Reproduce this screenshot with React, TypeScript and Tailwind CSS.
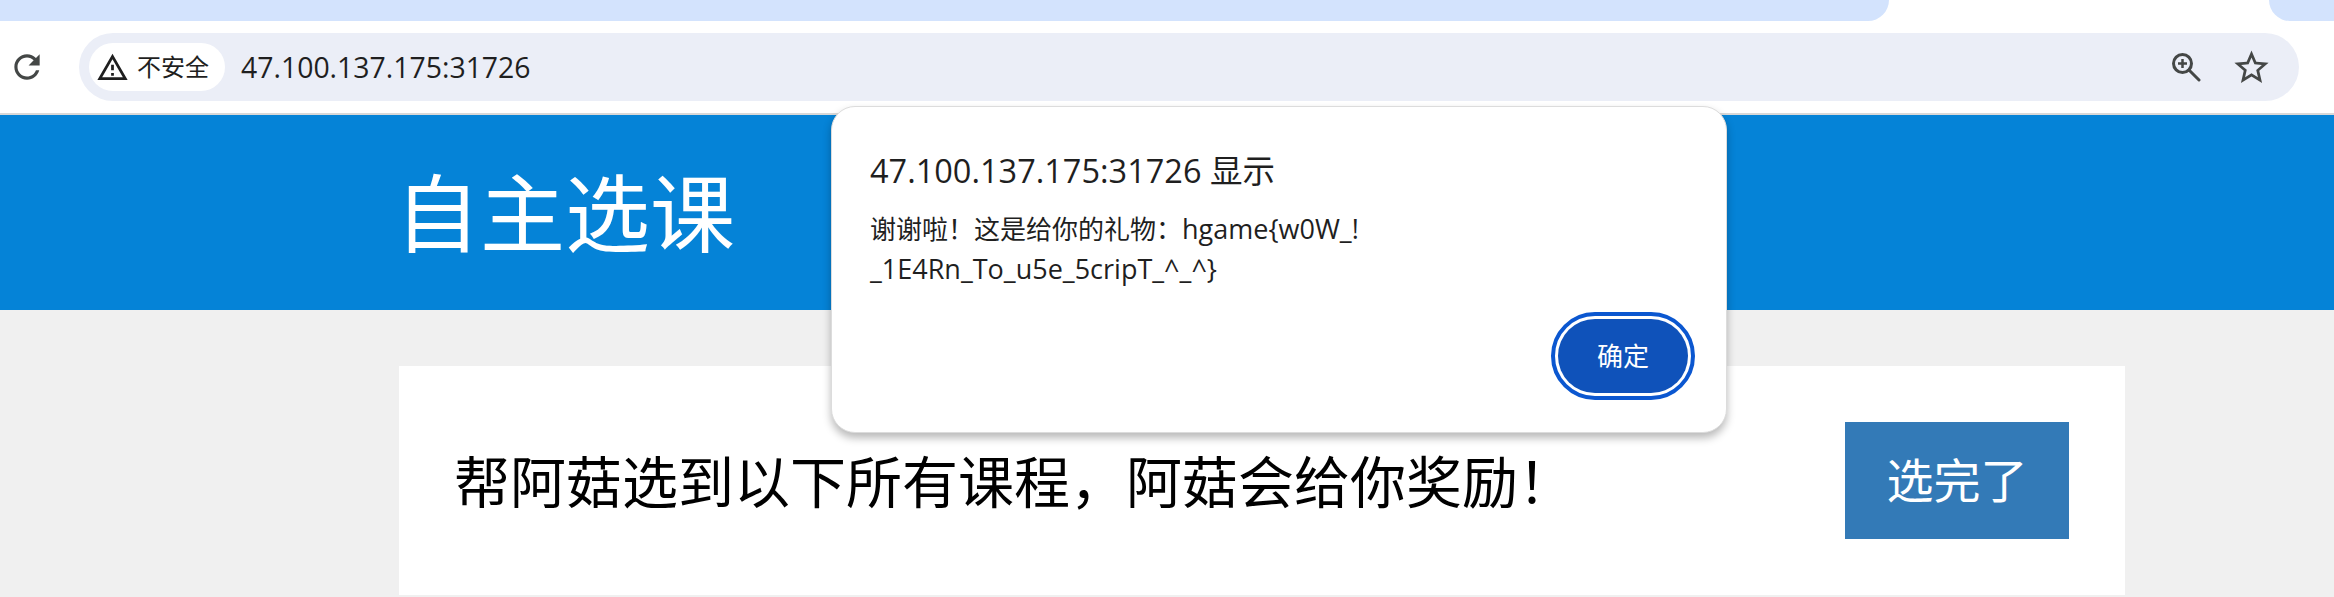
export default function App() {
  const sans = "font-['Open_Sans','Noto_Sans_CJK_SC',sans-serif]";
  return (
    <div className={`relative w-[2334px] h-[597px] overflow-hidden bg-[#f0f0f0] ${sans}`}>
      <div className="flex h-[21px] bg-white">
        <div className="w-[1889px] bg-[#d3e3fd] rounded-br-[24px]" />
        <div className="ml-[380px] flex-1 bg-[#d3e3fd] rounded-bl-[24px]" />
      </div>
      <div className="flex h-[94px] items-center bg-white border-b-2 border-[#d8d8d8]">
        <svg viewBox="0 0 24 24" className="ml-[8px] w-[38px] h-[38px] fill-[#444746]">
          <path d="M17.65 6.35C16.2 4.9 14.21 4 12 4c-4.42 0-7.99 3.58-7.99 8s3.57 8 7.99 8c3.73 0 6.84-2.55 7.73-6h-2.08c-.82 2.33-3.04 4-5.65 4-3.31 0-6-2.69-6-6s2.69-6 6-6c1.66 0 3.14.69 4.22 1.78L13 11h7V4l-2.35 2.35z" />
        </svg>
        <div className="ml-[33px] flex h-[68px] w-[2220px] items-center rounded-[34px] bg-[#ebeef7] pl-[10px]">
          <div className="flex h-[48px] w-[136px] items-center rounded-[24px] bg-white pl-[7px]">
            <svg viewBox="0 0 24 24" className="w-[33px] h-[33px] fill-[#1f1f1f] shrink-0">
              <path d="M1 21h22L12 2 1 21zm3.47-2L12 5.99 19.53 19H4.47zM11 16h2v2h-2zm0-6h2v4h-2z" />
            </svg>
            <span className="ml-[8px] text-[24px] leading-none text-[#1f1f1f] whitespace-nowrap">不安全</span>
          </div>
          <span className="ml-[16px] text-[28.4px] leading-none text-[#1f1f1f]">47.100.137.175:31726</span>
          <svg viewBox="0 0 30 30" className="ml-auto w-[30px] h-[30px] fill-none stroke-[#444746]">
            <circle cx="11.5" cy="11.5" r="9" strokeWidth="3" />
            <path d="M18 18l10 10" strokeWidth="3" strokeLinecap="round" />
            <path d="M11.5 7v9M7 11.5h9" strokeWidth="2.5" />
          </svg>
          <svg viewBox="0 0 24 24" className="ml-[30px] mr-[27px] w-[41px] h-[41px] fill-[#444746]">
            <path d="M22 9.24l-7.19-.62L12 2 9.19 8.63 2 9.24l5.46 4.73L5.82 21 12 17.27 18.18 21l-1.63-7.03L22 9.24zM12 15.4l-3.76 2.27 1-4.28-3.32-2.88 4.38-.38L12 6.1l1.71 4.04 4.38.38-3.32 2.88 1 4.28L12 15.4z" />
          </svg>
        </div>
      </div>

      <div className="flex h-[195px] items-center bg-[#0583d7] pl-[395px] pt-[2px]">
        <h1 className="text-[85px] leading-none font-normal text-white">自主选课</h1>
      </div>

      <div className="ml-[399px] mt-[56px] flex h-[229px] w-[1726px] items-center justify-between bg-white pl-[55px] pr-[56px]">
        <h2 className="text-[56px] leading-none font-normal text-black whitespace-nowrap">帮阿菇选到以下所有课程，阿菇会给你奖励！</h2>
        <button className="flex h-[117px] w-[224px] items-center justify-center bg-[#337ab7] text-[47px] leading-none text-white">选完了</button>
      </div>

      <div className="absolute left-[831px] top-[106px] flex h-[327px] w-[896px] flex-col rounded-[24px] border border-[#dcdcdc] bg-white pl-[38px] pr-[38px] pt-[44px] shadow-[0_5px_8px_rgba(0,0,0,0.28)]">
        <div className="text-[32.5px] leading-[40px] text-[#1f1f1f]">47.100.137.175:31726 显示</div>
        <p className="mt-[18px] text-[26px] leading-[40px] text-[#1f1f1f]">
          谢谢啦！这是给你的礼物：<span className="text-[27px]">hgame{"{"}w0W_!</span><br /><span className="text-[27px]">_1E4Rn_To_u5e_5cripT_^_^{"}"}</span>
        </p>
        <div className="mt-auto mb-[39px] flex justify-end">
          <button className="h-[74px] w-[130px] rounded-[37px] bg-[#0f52ba] text-[26px] text-white outline-[4px] outline-offset-[3px] outline-solid outline-[#0b57d0]">确定</button>
        </div>
      </div>
    </div>
  );
}
